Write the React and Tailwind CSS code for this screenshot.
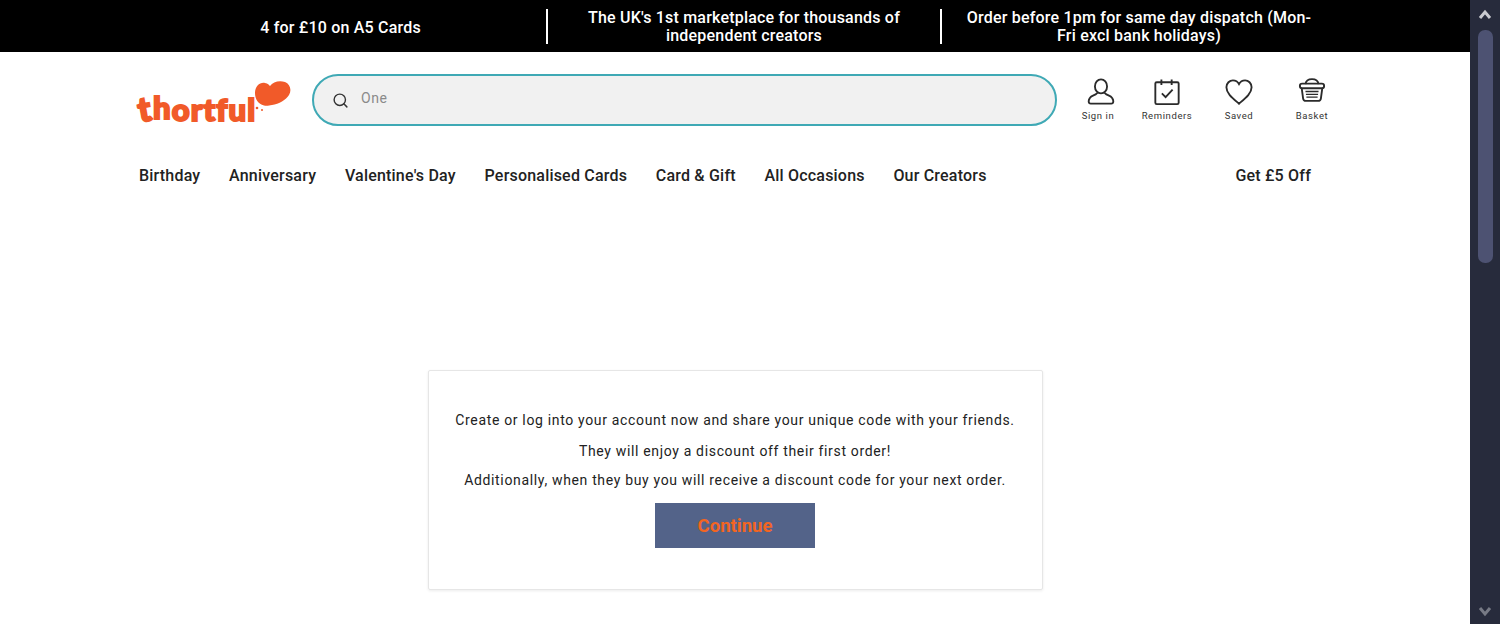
import React from 'react';
import { Search } from 'lucide-react';

const navLinks = ['Birthday', 'Anniversary', "Valentine's Day", 'Personalised Cards', 'Card & Gift', 'All Occasions', 'Our Creators'];

function UserIcon() {
  return (
    <svg className="ml-[6px]" width="28" height="28" viewBox="0 0 30 30" fill="none" stroke="#2b2b2b" strokeWidth="2">
      <ellipse cx="15" cy="9" rx="6.500" ry="7.500" />
      <path d="M11 15.500c0 2.500-6 3-8 6-1.500 2-2 6 1 6h22c3 0 2.500-4 1-6-2-3-8-3.500-8-6" />
    </svg>
  );
}

function CalendarIcon() {
  return (
    <svg width="28" height="28" viewBox="0 0 30 30" fill="none" stroke="#2b2b2b" strokeWidth="2">
      <rect x="2.500" y="4.500" width="25" height="23.500" rx="1.500" />
      <path d="M9 1.500v6M20 1.500v6" />
      <path d="M9.500 16.500l4 4 7.500-8" />
    </svg>
  );
}

function HeartIcon() {
  return (
    <svg width="28" height="28" viewBox="0 0 30 30" fill="none" stroke="#2b2b2b" strokeWidth="2">
      <path d="M15 27.500C8 21.500 1.500 16.500 1.500 10 1.500 5.500 5 2.500 8.500 2.500c3 0 5.200 1.500 6.500 4 1.300-2.500 3.500-4 6.500-4 3.500 0 7 3 7 7.500 0 6.500-6.500 11.500-13.500 17.500z" />
    </svg>
  );
}

function BasketIcon() {
  return (
    <svg width="28" height="28" viewBox="0 0 30 30" fill="none" stroke="#2b2b2b" strokeWidth="2">
      <g transform="translate(0 -2.500)">
        <path d="M8 9c1-7 13-7 14 0" />
        <rect x="2" y="8.500" width="26" height="5" rx="2.500" />
        <path d="M4 13.500l1.500 11c.2 1.500 1 2.500 3 2.500h13c2 0 2.800-1 3-2.500l1.500-11" />
        <path d="M8 17h14M8.500 20h13M9 23h12" strokeWidth="1.500" />
      </g>
    </svg>
  );
}

function HeaderIcon({ icon, label, className }) {
  return (
    <div className={`flex flex-col items-center ${className}`}>
      {icon}
      <span className="mt-[4px] whitespace-nowrap text-[9.500px] leading-[12px] tracking-[0.6px] text-[#333]">{label}</span>
    </div>
  );
}

function Logo() {
  return (
    <div className="relative h-[46px] w-[156px] shrink-0">
      <span className="absolute left-[4px] top-[9px] whitespace-nowrap text-[31px] leading-[38px] font-black tracking-[1.100px] text-[#f15a29] [font-family:Lato,'Noto_Sans',sans-serif] [-webkit-text-stroke:2px_#f15a29]">
        <span className="inline-block origin-bottom -rotate-[10deg] text-[34px]">t</span>
        <span className="-ml-[2px] inline-block -translate-y-[2px]">h</span>
        ortful
      </span>
      <svg className="absolute right-[2px] top-0" width="37" height="32" viewBox="0 0 37 32" fill="#f15a29">
        <path d="M1 13C1 6 6 2 11 3c3 .5 4 2 5 3 3-4 9-6 15-4 5 2 7 8 4 13-3 5-10 9-17 10-3 .5-5 1-8 .5C4 24 1 19 1 13z" />
        <circle cx="3" cy="28" r="1.300" />
        <circle cx="8" cy="30" r="1" />
      </svg>
    </div>
  );
}

export default function App() {
  return (
    <div className="flex h-[624px] w-full overflow-hidden bg-white [font-family:Roboto,sans-serif]">
      <div className="min-w-0 flex-1">
        {/* Bandeau promo */}
        <div className="h-[52px] bg-black pl-[135px] pt-[9px]">
          <div className="flex h-[35px] text-white text-[16px] leading-[18px] font-medium tracking-[0.2px]">
            <div className="flex w-[413px] items-center justify-center border-r-2 border-white pt-[2px] text-center">
              4 for £10 on A5 Cards
            </div>
            <div className="flex w-[394px] items-center justify-center border-r-2 border-white px-5 text-center">
              The UK's 1st marketplace for thousands of independent creators
            </div>
            <div className="flex w-[394px] items-center justify-center px-[24px] text-center">
              Order before 1pm for same day dispatch (Mon-Fri excl bank holidays)
            </div>
          </div>
        </div>

        {/* Header */}
        <header className="flex items-start pl-[137px] pt-[22px]">
          <div className="pt-[6px]">
            <Logo />
          </div>
          <div className="ml-[19px] flex h-[52px] w-[745px] items-center rounded-[26px] border-2 border-[#3fa9b5] bg-[#f1f1f1] pl-[18px]">
            <Search size={17} strokeWidth={2} className="text-[#333]" />
            <span className="ml-[12px] -mt-[4px] text-[14px] tracking-[0.6px] text-[#8a8a8a]">One</span>
          </div>
          <div className="ml-[24px] flex pt-[4px]">
            <HeaderIcon icon={<UserIcon />} label="Sign in" className="w-[34px]" />
            <HeaderIcon icon={<CalendarIcon />} label="Reminders" className="ml-[35px] w-[34px]" />
            <HeaderIcon icon={<HeartIcon />} label="Saved" className="ml-[38px] w-[34px]" />
            <HeaderIcon icon={<BasketIcon />} label="Basket" className="ml-[39px] w-[34px]" />
          </div>
        </header>

        {/* Nav */}
        <nav className="mt-[40px] flex w-[1311px] items-center pl-[139px] text-[16px] leading-[20px] font-medium tracking-[0.2px] text-[#222]">
          <div className="flex gap-[28.700px]">
            {navLinks.map((link) => (
              <a key={link}>{link}</a>
            ))}
          </div>
          <a className="ml-auto">Get £5 Off</a>
        </nav>

        {/* Carte */}
        <main className="pt-[184px]">
          <div className="ml-[428px] flex h-[220px] w-[615px] flex-col items-center rounded-[2px] border border-[#e6e6e6] pr-[1px] pt-[39px] text-[14px] tracking-[0.66px] text-[#222] shadow-[0_1px_3px_rgba(0,0,0,0.08)]">
            <p className="leading-[20px]">Create or log into your account now and share your unique code with your friends.</p>
            <p className="mt-[11px] leading-[20px]">They will enjoy a discount off their first order!</p>
            <p className="mt-[9px] leading-[20px]">Additionally, when they buy you will receive a discount code for your next order.</p>
            <button className="mt-[13px] h-[45px] w-[160px] bg-[#536389] pt-[2px] text-[18.500px] font-bold tracking-normal text-[#f26522]">
              Continue
            </button>
          </div>
        </main>
      </div>

      {/* Barre de défilement */}
      <div className="flex h-full w-[30px] shrink-0 flex-col items-center bg-[#272b3c] pt-[9px]">
        <svg width="14" height="12" viewBox="0 0 14 12" fill="none" stroke="#c9cad0" strokeWidth="3">
          <path d="M2 9l5-6 5 6" />
        </svg>
        <div className="mt-[9px] h-[233px] w-[15px] rounded-[7px] bg-[#4d5272]" />
        <svg className="mt-auto mb-[7px]" width="14" height="12" viewBox="0 0 14 12" fill="none" stroke="#777a85" strokeWidth="3">
          <path d="M2 3l5 6 5-6" />
        </svg>
      </div>
    </div>
  );
}
